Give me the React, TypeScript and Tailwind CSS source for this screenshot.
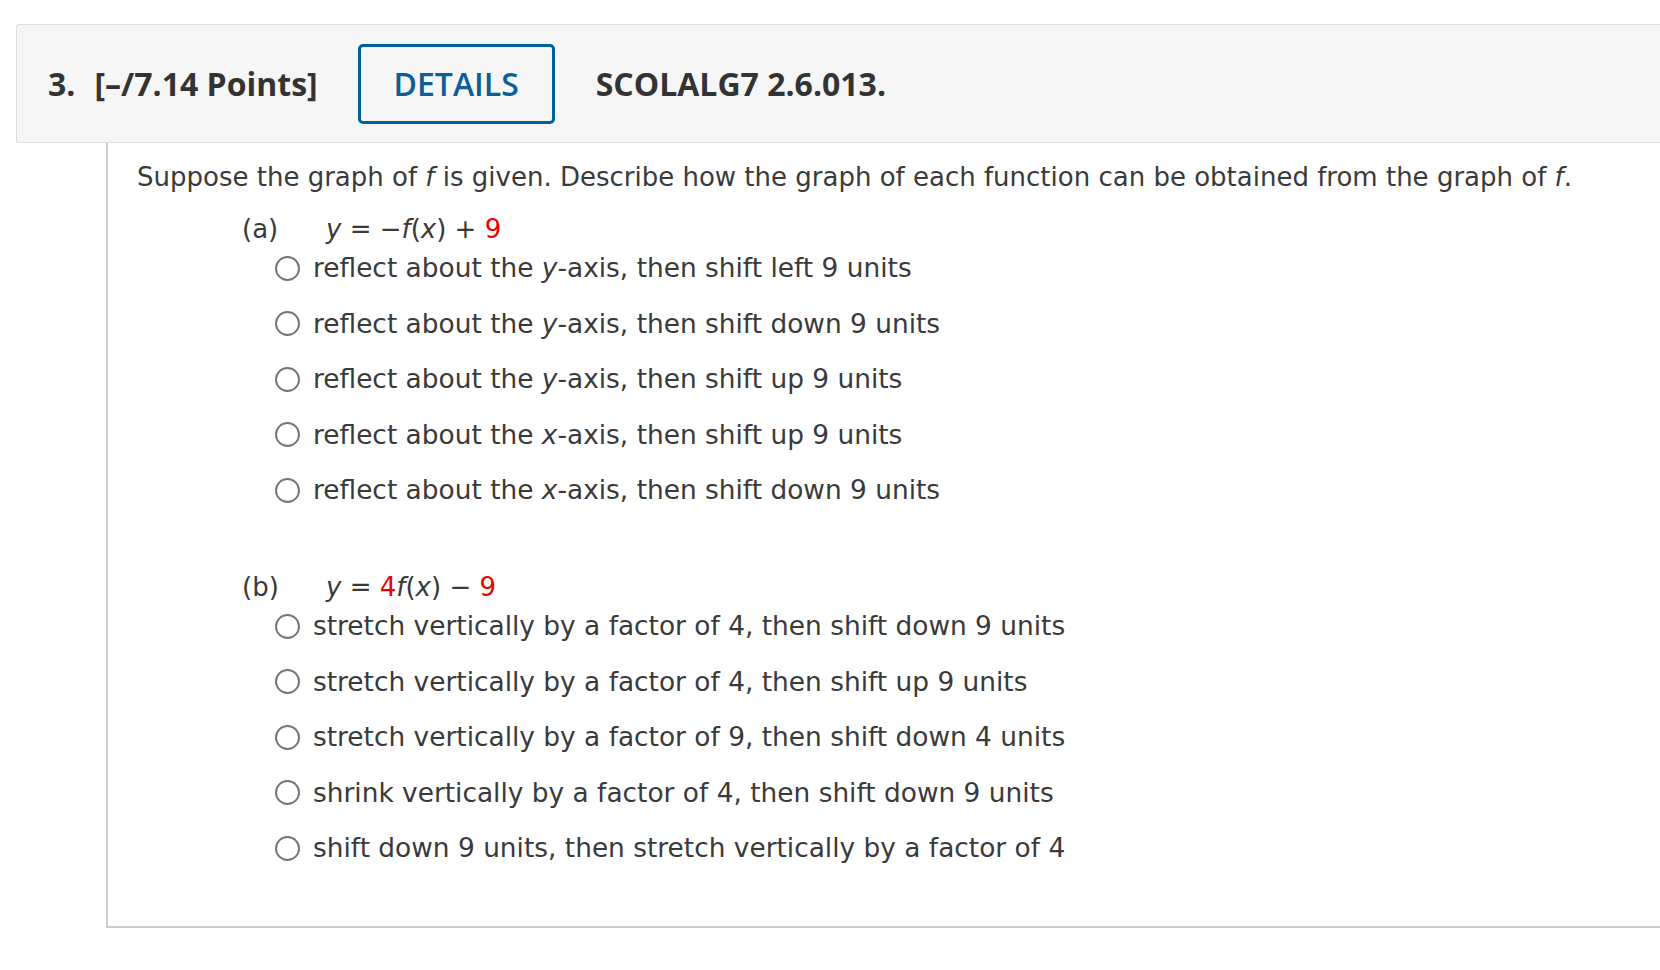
import React from 'react'

const partA = [
  <>reflect about the <i>y</i>-axis, then shift left 9 units</>,
  <>reflect about the <i>y</i>-axis, then shift down 9 units</>,
  <>reflect about the <i>y</i>-axis, then shift up 9 units</>,
  <>reflect about the <i>x</i>-axis, then shift up 9 units</>,
  <>reflect about the <i>x</i>-axis, then shift down 9 units</>,
]

const partB = [
  'stretch vertically by a factor of 4, then shift down 9 units',
  'stretch vertically by a factor of 4, then shift up 9 units',
  'stretch vertically by a factor of 9, then shift down 4 units',
  'shrink vertically by a factor of 4, then shift down 9 units',
  'shift down 9 units, then stretch vertically by a factor of 4',
]

function Option({ children }: { children: React.ReactNode }) {
  return (
    <label className="flex items-center h-[32px] pl-[167px] gap-[13px] text-[26.4px] cursor-pointer">
      <span className="w-[25px] h-[25px] rounded-full border-2 border-[#767676] bg-white shrink-0" />
      <span>{children}</span>
    </label>
  )
}

export default function App() {
  return (
    <div className="w-[1660px] h-[970px] bg-white overflow-hidden pt-[24px] pl-[16px] text-[#333]">
      {/* question header */}
      <div className="h-[119px] flex items-center bg-[#f6f6f6] border border-r-0 border-[#dedede] rounded-l-[3px] pl-[31px] font-['Open_Sans',sans-serif] font-bold text-[32px] text-[#333]">
        <span>3.</span>
        <span className="ml-[19px]">[–/7.14 Points]</span>
        <button className="ml-[40px] w-[197px] h-[80px] border-[3px] border-[#00609c] rounded-[5px] bg-transparent text-[#0b5e97] font-semibold text-[32px]">
          DETAILS
        </button>
        <span className="ml-[41px]">SCOLALG7 2.6.013.</span>
      </div>

      {/* question body */}
      <div className="ml-[90px] h-[785px] border-l-2 border-b-2 border-[#cccccc] font-['DejaVu_Sans',Verdana,sans-serif] text-[26px] text-[#3a3a3a] pt-[18px]">
        <div className="h-[32px] flex items-center pl-[29px]">
          <span>
            Suppose the graph of <i>f</i> is given. Describe how the graph of each function can be obtained from the graph of <i>f</i>.
          </span>
        </div>

        <div className="mt-[20px] h-[32px] flex items-center pl-[134px]">
          <span className="w-[84px]">(a)</span>
          <span>
            <i>y</i> = −<i>f</i>(<i>x</i>) + <span className="text-[#e00]">9</span>
          </span>
        </div>
        <div className="mt-[7px] flex flex-col gap-[23.5px]">
          {partA.map((t, i) => (
            <Option key={i}>{t}</Option>
          ))}
        </div>

        <div className="mt-[65px] h-[32px] flex items-center pl-[134px]">
          <span className="w-[84px]">(b)</span>
          <span>
            <i>y</i> = <span className="text-[#e00]">4</span><i>f</i>(<i>x</i>) − <span className="text-[#e00]">9</span>
          </span>
        </div>
        <div className="mt-[7px] flex flex-col gap-[23.5px]">
          {partB.map((t, i) => (
            <Option key={i}>{t}</Option>
          ))}
        </div>
      </div>
    </div>
  )
}
